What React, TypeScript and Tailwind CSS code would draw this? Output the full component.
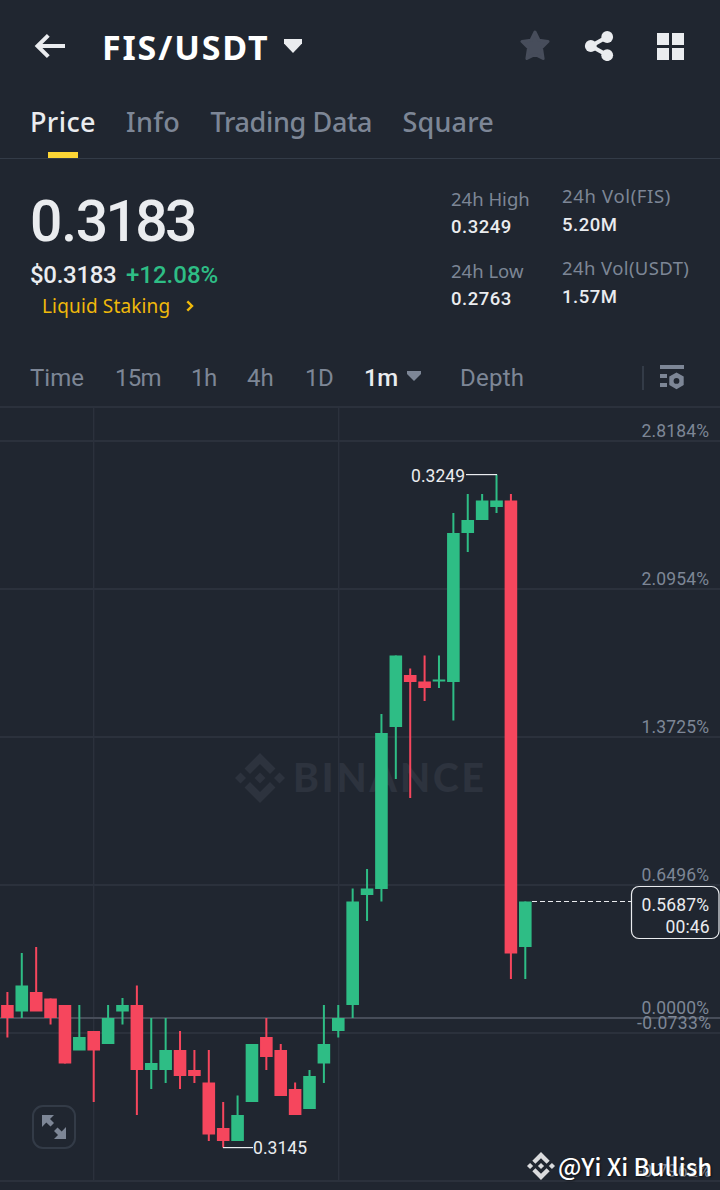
import clsx from "clsx";

type Candle = {
  up: boolean;
  high: number;
  low: number;
  top: number;
  bottom: number;
};

// [direction, wick top, wick bottom, body top, body bottom]
const series: [string, number, number, number, number][] = [
  ["d", 992, 1037.5, 1005, 1018],
  ["u", 953, 1018, 985.5, 1011.5],
  ["d", 947, 1011, 992, 1011.5],
  ["d", 998.5, 1024.5, 998.5, 1018],
  ["d", 1005, 1063.5, 1005, 1063.5],
  ["u", 1005, 1050, 1037, 1050.5],
  ["d", 1031, 1102, 1031, 1050.5],
  ["u", 1005, 1044, 1018, 1044],
  ["u", 998, 1024.5, 1005, 1011.5],
  ["d", 985.5, 1115, 1005, 1070],
  ["u", 1018, 1089, 1063, 1070],
  ["u", 1018, 1083, 1050, 1070],
  ["d", 1031, 1089, 1050, 1076],
  ["d", 1050, 1083, 1070, 1076],
  ["d", 1050, 1141, 1082.5, 1134.5],
  ["d", 1102, 1147.5, 1128, 1141],
  ["u", 1095.5, 1141, 1115, 1141],
  ["u", 1044, 1102, 1044, 1102],
  ["d", 1018, 1070, 1037, 1057],
  ["d", 1044, 1096, 1050, 1096],
  ["d", 1082.5, 1115, 1089, 1115],
  ["u", 1070, 1109, 1076, 1109],
  ["u", 1005, 1083, 1044, 1063.5],
  ["u", 1005, 1037.5, 1018, 1031],
  ["u", 888.5, 1018, 901.5, 1005],
  ["u", 869, 921, 888.5, 895],
  ["u", 714, 901.5, 733, 889],
  ["u", 655.5, 779, 655.5, 727],
  ["d", 668.5, 798, 675, 682],
  ["d", 655.5, 701, 681.5, 688],
  ["u", 655.5, 688, 679.5, 681.5],
  ["u", 513, 720.5, 533, 682],
  ["u", 494, 552, 520, 533],
  ["u", 494, 520, 500.5, 520],
  ["u", 474.5, 513, 500.5, 507],
  ["d", 494, 979, 500.5, 953.5],
  ["u", 901.5, 979, 901.5, 947],
];

const candles: Candle[] = series.map(([d, high, low, top, bottom]) => ({
  up: d === "u",
  high,
  low,
  top,
  bottom,
}));

const STEP = 14.386;
const BODY = 12.6;

const axis = [
  { y: 437, label: "2.8184%" },
  { y: 585, label: "2.0954%" },
  { y: 733, label: "1.3725%" },
  { y: 881, label: "0.6496%" },
  { y: 1014, label: "0.0000%" },
];

const tabs = [
  { label: "Price", className: "w-[65px] tracking-[0.400px]" },
  { label: "Info", className: "w-[53.500px] tracking-[0.400px]" },
  { label: "Trading Data", className: "w-[161px] tracking-[-0.350px]" },
  { label: "Square", className: "w-[92px] tracking-[0.200px]" },
];

const intervals = [
  { label: "Time", className: "w-[85px]" },
  { label: "15m", className: "w-[76px] tracking-[-0.800px]" },
  { label: "1h", className: "w-14 tracking-[-0.500px]" },
  { label: "4h", className: "w-[58px]" },
  { label: "1D", className: "w-[59px] tracking-[-0.500px]" },
];

function BinanceMark({ className }: { className?: string }) {
  return (
    <svg viewBox="0 0 50 50" className={className} fill="currentColor" aria-hidden="true">
      <BinancePaths />
    </svg>
  );
}

function BinancePaths() {
  return (
    <>
      <path d="M25 0 40.500 15.500 35 21 25 11 15 21 9.500 15.500Z" />
      <path d="M25 50 9.500 34.500 15 29 25 39 35 29 40.500 34.500Z" />
      <path d="M25 19.500 30.500 25 25 30.500 19.500 25Z" />
      <path d="M5.500 19.500 11 25 5.500 30.500 0 25Z" />
      <path d="M44.500 19.500 50 25 44.500 30.500 39 25Z" />
    </>
  );
}

function Header() {
  return (
    <header className="flex h-[92px] items-center pl-[34px] pr-9">
      <svg width="32" height="26" viewBox="0 0 32 26" className="shrink-0 text-[#eaecef]">
        <path
          d="M31 13H4M14.300 2.300 3.500 13l10.800 10.700"
          fill="none"
          stroke="currentColor"
          strokeWidth="4"
        />
      </svg>
      <h1 className="ml-9 w-[167px] whitespace-nowrap pt-0.5 font-['Noto_Sans'] text-[34px] font-bold tracking-[1.850px] text-white">
        FIS/USDT
      </h1>
      <svg width="18" height="15" viewBox="0 0 18 15" className="ml-[15px] text-[#eaecef]">
        <path d="M0 0h18v4.500L9 14 0 4.500Z" fill="currentColor" />
      </svg>
      <div className="ml-auto flex items-center text-[#eaecef]">
        <svg width="30" height="31" viewBox="0 0 30 31" className="mb-px text-[#474d5b]">
          <path
            d="M15 2l4 8.200 9 1.300-6.500 6.400 1.600 10.600L15 24.500l-8.100 4L8.500 17.900 2 11.500l9-1.300Z"
            fill="currentColor"
            stroke="currentColor"
            strokeWidth="3"
            strokeLinejoin="round"
          />
        </svg>
        <svg width="30" height="30" viewBox="0 0 30 30" className="ml-[34px]">
          <path d="M23 6 7 15l16 9" fill="none" stroke="currentColor" strokeWidth="4" />
          <circle cx="6.800" cy="15" r="5.900" fill="currentColor" />
          <circle cx="23.200" cy="6" r="5.900" fill="currentColor" />
          <circle cx="23.200" cy="24.200" r="5.900" fill="currentColor" />
        </svg>
        <div className="ml-[42.500px] mr-[0.500px] grid grid-cols-2 gap-[3px]">
          <span className="size-3 bg-[#eaecef]" />
          <span className="size-3 bg-[#eaecef]" />
          <span className="size-3 bg-[#eaecef]" />
          <span className="size-3 bg-[#eaecef]" />
        </div>
      </div>
    </header>
  );
}

function Tabs() {
  return (
    <nav className="flex h-[67px] gap-[31px] border-b border-[#333b47] pl-[30px] font-['Noto_Sans'] text-[27px] font-medium">
      {tabs.map((t, i) => (
        <div key={t.label} className={clsx("flex flex-col justify-between", t.className)}>
          <span
            className={clsx(
              "mt-3 whitespace-nowrap leading-9",
              i === 0 ? "text-[#eaecef]" : "text-[#7d8696]"
            )}
          >
            {t.label}
          </span>
          {i === 0 && <span className="ml-[18px] h-1.5 w-[30px] bg-[#fcd535]" />}
        </div>
      ))}
    </nav>
  );
}

function Stat({ label, value, className }: { label: string; value: string; className: string }) {
  return (
    <div className={clsx("flex flex-col whitespace-nowrap", className)}>
      <span className="font-['Noto_Sans'] text-[18.500px] leading-5 text-[#7d8696]">{label}</span>
      <span className="font-['Roboto'] text-[18.500px] font-medium leading-5 tracking-[0.500px] text-[#eaecef]">
        {value}
      </span>
    </div>
  );
}

function Summary() {
  return (
    <section className="flex h-[190px]">
      <div className="w-[451px] pl-[30px]">
        <div className="mt-[31px] h-16 font-['Roboto'] text-[57px] font-medium leading-[64px] tracking-[-2.700px] text-[#eaecef]">
          0<span className="mx-[1.500px]">.</span>3183
        </div>
        <div className="mt-[6px] flex h-[30px] font-['Roboto'] text-2xl font-medium leading-[30px]">
          <span className="w-24 tracking-[-0.300px] text-[#eaecef]">$0.3183</span>
          <span className="text-[#2ebd85]">+12.08%</span>
        </div>
        <div className="ml-3 mt-px flex h-[30px] items-center font-['Noto_Sans'] text-[19px] text-[#f0b90b]">
          <span className="w-36 tracking-[0.150px]">Liquid Staking</span>
          <svg width="8" height="12" viewBox="0 0 8 12">
            <path d="M1.300 1.300 6 6l-4.700 4.700" fill="none" stroke="currentColor" strokeWidth="2.400" />
          </svg>
        </div>
      </div>
      <div className="flex w-[111px] flex-col gap-6 pt-[30px]">
        <Stat label="24h High" value="0.3249" className="gap-2" />
        <Stat label="24h Low" value="0.2763" className="gap-2" />
      </div>
      <div className="flex flex-col gap-[23px] pt-[27px] tracking-[0.400px]">
        <Stat label="24h Vol(FIS)" value="5.20M" className="gap-[9px] tracking-[0.650px]" />
        <Stat label="24h Vol(USDT)" value="1.57M" className="gap-[9px]" />
      </div>
    </section>
  );
}

function Toolbar() {
  return (
    <div className="flex h-[57px] items-center pl-[30px] font-['Roboto'] text-2xl text-[#7d8696]">
      {intervals.map((t) => (
        <span key={t.label} className={t.className}>
          {t.label}
        </span>
      ))}
      <span className="w-[43px] font-medium tracking-[-0.500px] text-[#eaecef]">1m</span>
      <svg width="14" height="10" viewBox="0 0 14 10" className="mb-1">
        <path d="M0 0h14v3L7 10 0 3Z" fill="currentColor" />
      </svg>
      <span className="ml-[39px] w-[182px] tracking-[0.250px]">Depth</span>
      <span className="h-6 w-0.5 bg-[#333b47]" />
      <svg width="24" height="26" viewBox="0 0 24 26" className="mb-0.5 ml-4" fill="currentColor">
        <path d="M0 1h24v4H0zM0 10h7v4H0zM0 19h7v4H0z" />
        <path
          fillRule="evenodd"
          d="m16.500 8.500 7.200 4v8.500l-7.200 4.200L9.300 21v-8.500Zm0 5.500a2.900 2.900 0 1 0 0 5.800 2.900 2.900 0 0 0 0-5.800Z"
        />
      </svg>
    </div>
  );
}

function Chart() {
  return (
    <svg
      width="720"
      height="784"
      viewBox="0 406 720 784"
      className="block font-['Roboto'] text-[17.500px]"
    >
      <g fill="#2b313c">
        {[406, 440, 588, 736, 884, 1032, 1180].map((y) => (
          <rect key={y} x="0" y={y} width="720" height="2" />
        ))}
        <rect x="93" y="407" width="1.400" height="774" />
        <rect x="338" y="407" width="1.400" height="774" />
      </g>

      <g fill="#2d333e">
        <svg x="235" y="753" width="50" height="50" viewBox="0 0 50 50">
          <BinancePaths />
        </svg>
        <text
          x="293"
          y="792"
          textLength="191"
          className="font-['Lato'] text-[39px] font-black"
        >
          BINANCE
        </text>
      </g>

      <rect x="0" y="1017" width="720" height="2" fill="#474d59" />

      {candles.map((c, i) => {
        const x = 7.4 + i * STEP;
        return (
          <g key={i} fill={c.up ? "#2ebd85" : "#f6465d"}>
            <rect x={x - 1} y={c.high} width="2" height={c.low - c.high} />
            <rect x={x - BODY / 2} y={c.top} width={BODY} height={c.bottom - c.top} />
          </g>
        );
      })}

      <g fill="#7d8696">
        {axis.map((a) => (
          <text key={a.label} x="641.500" y={a.y} textLength="67.500">
            {a.label}
          </text>
        ))}
        <text x="637" y="1029" textLength="74">
          -0.0733%
        </text>
        <text x="637" y="1177" textLength="74">
          -0.7962%
        </text>
      </g>

      <g fill="#eaecef">
        <text x="411" y="482" textLength="54">
          0.3249
        </text>
        <rect x="466" y="474" width="31" height="1.200" />
        <text x="253" y="1154" textLength="54">
          0.3145
        </text>
        <rect x="223" y="1147" width="30" height="1.200" />
      </g>

      <path d="M532 901.500h99" stroke="#eaecef" strokeWidth="1.200" strokeDasharray="5 3" />
      <rect
        x="631.500"
        y="886.500"
        width="87.500"
        height="52"
        rx="7.500"
        fill="#202630"
        stroke="#eaecef"
        strokeWidth="1.200"
      />
      <g fill="#eaecef">
        <text x="641.500" y="911" textLength="67.500">
          0.5687%
        </text>
        <text x="665.500" y="933" textLength="44">
          00:46
        </text>
      </g>
    </svg>
  );
}

function ExpandButton() {
  return (
    <button
      type="button"
      aria-label="Expand chart"
      className="absolute bottom-[41px] left-8 flex size-11 items-center justify-center rounded-[11px] border-2 border-[#333b47] bg-[#202630] text-[#7d8696]"
    >
      <svg width="24" height="24" viewBox="0 0 24 24" fill="currentColor">
        <path d="M0 0h12L8 4l4 4-3.500 3.500-4.200-4L0 12Z" />
        <path d="M24 24H12l4-4-4-4 3.500-3.500 4.200 4L24 12Z" />
      </svg>
    </button>
  );
}

function Signature() {
  return (
    <div className="absolute bottom-[6px] left-[527px] flex items-center text-white">
      <BinanceMark className="size-7 text-[#dadbdd]" />
      <span className="ml-[3px] whitespace-nowrap font-['Noto_Sans_CJK_SC'] text-2xl font-medium leading-9 [text-shadow:1px_1px_2px_rgba(0,0,0,0.6)]">
        @Yi Xi Bullish
      </span>
    </div>
  );
}

export default function App() {
  return (
    <main className="relative flex h-[1190px] w-[720px] flex-col overflow-hidden bg-[#202630]">
      <Header />
      <Tabs />
      <Summary />
      <Toolbar />
      <Chart />
      <ExpandButton />
      <Signature />
    </main>
  );
}
